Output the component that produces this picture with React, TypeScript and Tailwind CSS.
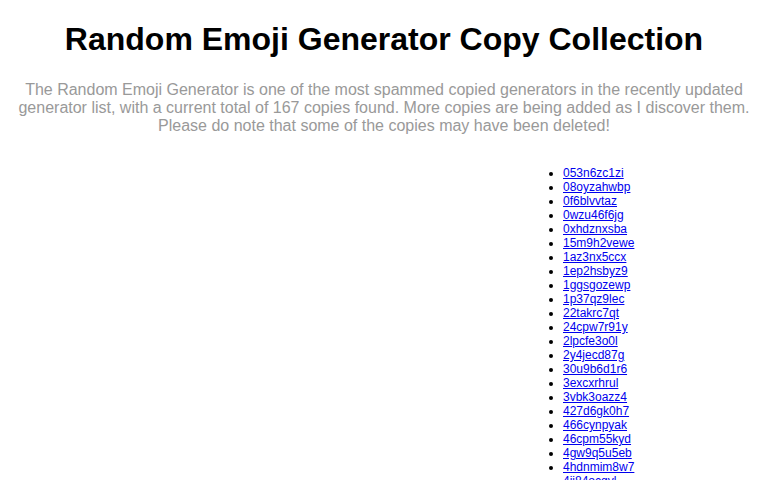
import React from "react";

const items = [
  "053n6zc1zi",
  "08oyzahwbp",
  "0f6blvvtaz",
  "0wzu46f6jg",
  "0xhdznxsba",
  "15m9h2vewe",
  "1az3nx5ccx",
  "1ep2hsbyz9",
  "1ggsgozewp",
  "1p37qz9lec",
  "22takrc7qt",
  "24cpw7r91y",
  "2lpcfe3o0l",
  "2y4jecd87g",
  "30u9b6d1r6",
  "3excxrhrul",
  "3vbk3oazz4",
  "427d6gk0h7",
  "466cynpyak",
  "46cpm55kyd",
  "4gw9q5u5eb",
  "4hdnmim8w7",
  "4ij84ocgyl",
  "4kx2b8nq1p",
];

export default function App() {
  return (
    <div
      className="min-h-screen bg-white px-2 pt-[21px]"
      style={{ fontFamily: '"Liberation Sans", Arial, sans-serif' }}
    >
      <h1 className="text-center text-[32px] font-bold leading-[normal] text-black">
        Random Emoji Generator Copy Collection
      </h1>
      <p className="mt-[23px] text-center text-[16px] leading-[normal] text-[#999999]">
        The Random Emoji Generator is one of the most spammed copied generators in the recently updated
        generator list, with a current total of 167 copies found. More copies are being added as I discover them.
        Please do note that some of the copies may have been deleted!
      </p>
      <ul className="mt-[31px] ml-[515px] list-disc pl-10 text-[12px] leading-[14px]">
        {items.map((it) => (
          <li key={it}>
            <a href="#" className="text-[#0000ee] underline">
              {it}
            </a>
          </li>
        ))}
      </ul>
    </div>
  );
}
